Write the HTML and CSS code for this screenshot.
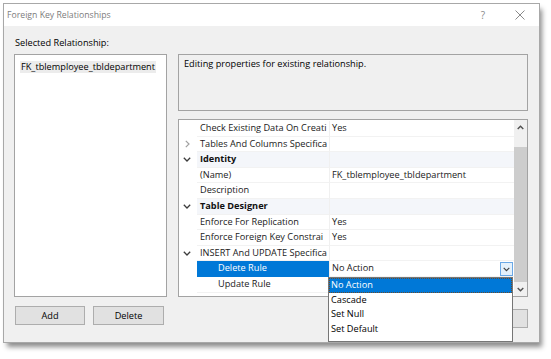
FILE: index.html
```html
<!DOCTYPE html>
<html>
<head>
<meta charset="utf-8">
<link rel="stylesheet" href="styles.css">
</head>
<body>
<div class="dialog">
  <div class="titlebar">
    <span class="title">Foreign Key Relationships</span>
    <span class="tb-btn help">?</span>
    <span class="tb-btn close"><svg width="10" height="10" viewBox="0 0 10 10"><path d="M0.5 0.5L9.5 9.5M9.5 0.5L0.5 9.5" stroke="#8a8a8a" stroke-width="1" fill="none"/></svg></span>
  </div>
  <div class="body">
    <div class="label">Selected Relationship:</div>
    <div class="listbox"><span class="list-item">FK_tblemployee_tbldepartment</span></div>
    <div class="right">
      <div class="desc">Editing properties for existing relationship.</div>
      <div class="pgrid">
        <div class="rows">
          <div class="row"><span class="exp"></span><span class="name">Check Existing Data On Creati</span><span class="val">Yes</span></div>
          <div class="row"><span class="exp"><svg width="5" height="8" viewBox="0 0 5 8"><polyline points="0.8,0.8 4,4 0.8,7.2" fill="none" stroke="#a0a0a0" stroke-width="1.2"/></svg></span><span class="name">Tables And Columns Specifica</span><span class="val"></span></div>
          <div class="row cat"><span class="exp"><svg width="8" height="5" viewBox="0 0 8 5"><polyline points="0.8,0.8 4,4 7.2,0.8" fill="none" stroke="#3c3c3c" stroke-width="1.3"/></svg></span><span class="name">Identity</span><span class="val"></span></div>
          <div class="row"><span class="exp"></span><span class="name">(Name)</span><span class="val">FK_tblemployee_tbldepartment</span></div>
          <div class="row"><span class="exp"></span><span class="name">Description</span><span class="val"></span></div>
          <div class="row cat"><span class="exp"><svg width="8" height="5" viewBox="0 0 8 5"><polyline points="0.8,0.8 4,4 7.2,0.8" fill="none" stroke="#3c3c3c" stroke-width="1.3"/></svg></span><span class="name">Table Designer</span><span class="val"></span></div>
          <div class="row"><span class="exp"></span><span class="name">Enforce For Replication</span><span class="val">Yes</span></div>
          <div class="row"><span class="exp"></span><span class="name">Enforce Foreign Key Constrai</span><span class="val">Yes</span></div>
          <div class="row"><span class="exp"><svg width="8" height="5" viewBox="0 0 8 5"><polyline points="0.8,0.8 4,4 7.2,0.8" fill="none" stroke="#3c3c3c" stroke-width="1.3"/></svg></span><span class="name">INSERT And UPDATE Specifica</span><span class="val"></span></div>
          <div class="row sub sel"><span class="exp"></span><span class="name">Delete Rule</span><span class="val combo">No Action
            <span class="dd-btn"><svg width="7" height="5" viewBox="0 0 7 5"><polyline points="0.7,0.9 3.5,3.7 6.3,0.9" fill="none" stroke="#404040" stroke-width="1.2"/></svg></span>
            <span class="dd-list">
              <span class="dd-item on">No Action</span>
              <span class="dd-item">Cascade</span>
              <span class="dd-item">Set Null</span>
              <span class="dd-item">Set Default</span>
            </span>
          </span></div>
          <div class="row sub"><span class="exp"></span><span class="name">Update Rule</span><span class="val"></span></div>
        </div>
        <div class="vscroll">
          <span class="sb-arrow"><svg width="7" height="5" viewBox="0 0 7 5"><polyline points="0.7,4.1 3.5,1.3 6.3,4.1" fill="none" stroke="#505050" stroke-width="1.4"/></svg></span>
          <span class="sb-track"></span>
          <span class="sb-thumb"></span>
          <span class="sb-arrow"><svg width="7" height="5" viewBox="0 0 7 5"><polyline points="0.7,0.9 3.5,3.7 6.3,0.9" fill="none" stroke="#505050" stroke-width="1.4"/></svg></span>
        </div>
      </div>
    </div>
    <div class="buttons">
      <button class="btn add">Add</button>
      <button class="btn del">Delete</button>
    </div>
    <div class="buttons end">
      <button class="btn closebtn">Close</button>
    </div>
  </div>
</div>
</body>
</html>
```

FILE: styles.css
```css
* { box-sizing: border-box; }
html, body { margin: 0; padding: 0; background: #ffffff; }
body {
  width: 551px;
  height: 359px;
  overflow: hidden;
  font-family: "Open Sans", "Noto Sans", sans-serif;
  font-size: 9.2px;
  color: #000;
}
.dialog {
  margin: 3px 0 0 3px;
  width: 537px;
  height: 340px;
  border: 1px solid #a8a8a8;
  background: #f0f0f0;
  box-shadow: 3px 5px 5px -1px rgba(0,0,0,0.45);
  display: flex;
  flex-direction: column;
}
.titlebar {
  height: 22px;
  background: #ffffff;
  display: flex;
  align-items: center;
  padding-left: 3px;
  color: #7c7c7c;
  font-size: 8.7px;
}
.title { flex: 1; }
.tb-btn {
  display: flex;
  align-items: center;
  justify-content: center;
  height: 22px;
}
.help { width: 36px; font-size: 10px; color: #8a8a8a; }
.close { width: 38px; }

.body {
  flex: 1;
  display: grid;
  grid-template-columns: 153px 350px;
  grid-template-rows: 18px 243px auto;
  column-gap: 11px;
  padding: 10px 10px 0 10px;
}
.label {
  grid-column: 1;
  grid-row: 1;
  line-height: 14px;
  padding-left: 1px;
  color: #000;
}
.listbox {
  grid-column: 1;
  grid-row: 2;
  border: 1px solid #a3a3a3;
  background: #fff;
  padding: 5px 0 0 5px;
}
.list-item {
  display: inline-block;
  line-height: 12px;
  padding: 0 1px;
  background: #ececec;
}
.right {
  grid-column: 2;
  grid-row: 2;
  display: flex;
  flex-direction: column;
  gap: 8px;
}
.desc {
  height: 57px;
  border: 1px solid #a3a3a3;
  background: #f0f0f0;
  padding: 2px 5px;
  line-height: 13px;
}
.pgrid {
  flex: 1;
  border: 1px solid #a3a3a3;
  background: #fff;
  display: flex;
}
.rows {
  flex: 1;
  padding-top: 1px;
}
.row {
  display: grid;
  grid-template-columns: 18px 132px 185px;
  height: 15.6px;
  line-height: 14.6px;
}
.exp {
  display: flex;
  align-items: center;
  justify-content: center;
  padding-right: 2px;
}
.name, .val {
  white-space: nowrap;
  overflow: hidden;
  border-bottom: 1px solid #f2f2f2;
}
.name { padding-left: 3px; color: #1a1a1a; }
.val { padding-left: 2px; border-left: 1px solid #f0f0f0; color: #1a1a1a; }
.row.cat .name, .row.cat .val { background: #f4f6fa; }
.row.cat .name { font-weight: 700; color: #111; }
.row.sub .name { padding-left: 21px; }
.row.sel .name { background: #0078d7; color: #fff; border-bottom-color: #0078d7; }
.val.combo { position: relative; overflow: visible; }
.dd-btn {
  position: absolute;
  right: 1px;
  top: 1px;
  width: 13px;
  height: 14px;
  border: 1px solid #6aa8e6;
  background: #e5f1fb;
  display: flex;
  align-items: center;
  justify-content: center;
}
.dd-list {
  position: absolute;
  left: -2px;
  top: calc(100% + 1px);
  width: 185px;
  height: 65px;
  border: 1px solid #767676;
  background: #fff;
  display: flex;
  flex-direction: column;
  z-index: 10;
}
.dd-item {
  height: 14.6px;
  line-height: 14.6px;
  padding-left: 2px;
  color: #000;
}
.dd-item.on {
  background: #0078d7;
  color: #fff;
  outline: 1px dotted #6b4a2a;
  outline-offset: -1px;
}
.vscroll {
  width: 13px;
  background: #f0f0f0;
  display: flex;
  flex-direction: column;
}
.sb-arrow {
  height: 14px;
  display: flex;
  align-items: center;
  justify-content: center;
}
.sb-track { height: 13px; }
.sb-thumb { height: 135px; background: #cdcdcd; }

.buttons {
  grid-row: 3;
  grid-column: 1;
  display: flex;
  gap: 8px;
  margin-top: 9px;
  padding-left: 1px;
}
.buttons.end {
  grid-column: 2;
  justify-content: flex-end;
  margin-top: 12px;
  padding-left: 0;
}
.btn {
  height: 19px;
  border: 1px solid #adadad;
  background: #e1e1e1;
  font-family: inherit;
  font-size: 9.2px;
  color: #000;
  padding: 0;
}
.add { width: 70px; }
.del { width: 71px; }
.closebtn { width: 75px; }
```
